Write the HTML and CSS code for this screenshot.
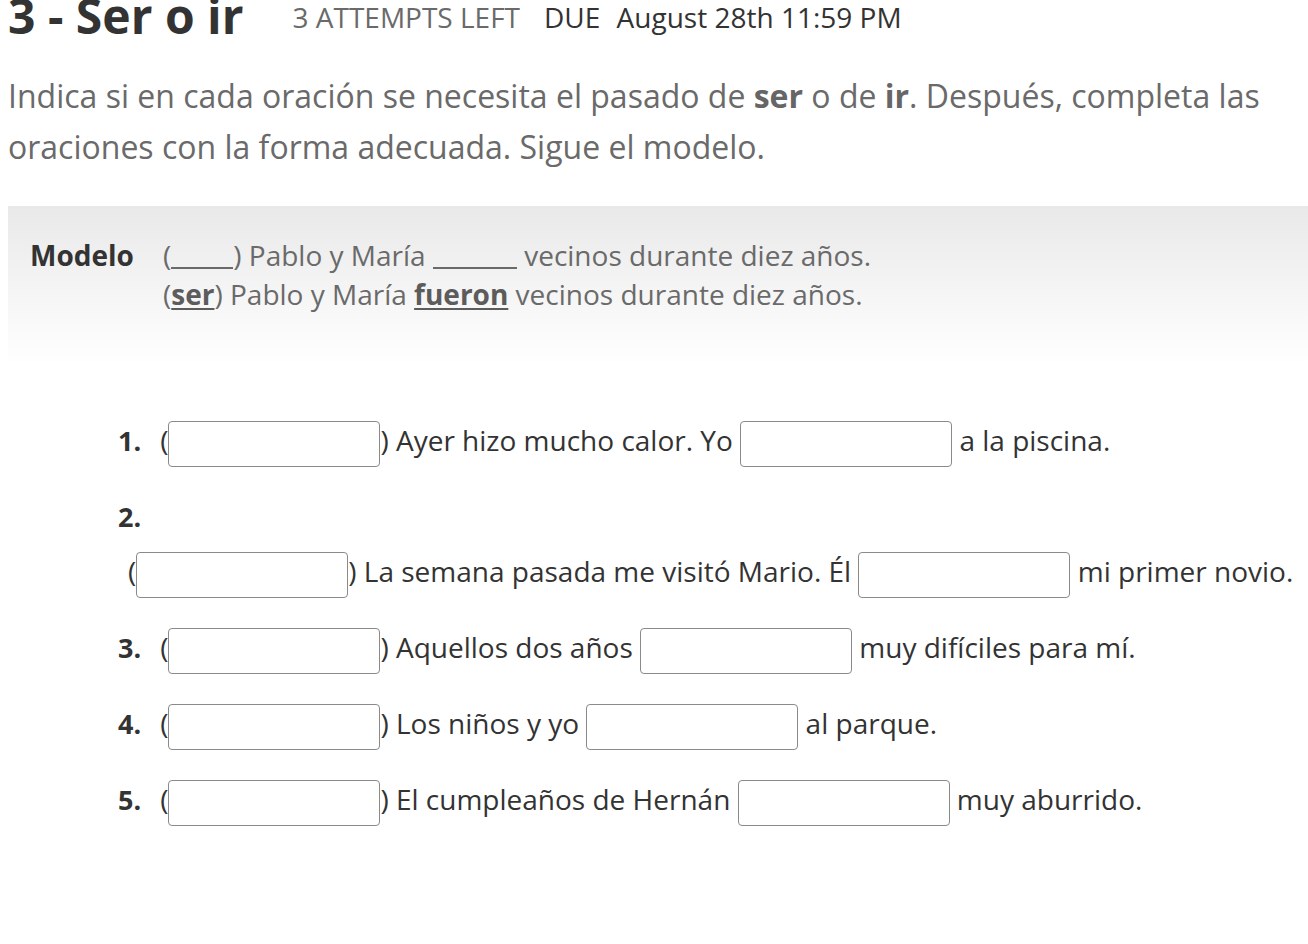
FILE: index.html
```html
<!DOCTYPE html>
<html lang="es">
<head>
<meta charset="UTF-8">
<meta name="viewport" content="width=device-width, initial-scale=1.0">
<title>3 - Ser o ir</title>
<link rel="stylesheet" href="styles.css">
</head>
<body>
<div class="page">
  <div class="header">
    <h1 class="title">3 - Ser o ir</h1>
    <span class="attempts">3 ATTEMPTS LEFT</span>
    <span class="due"><span class="due-label">DUE</span> August 28th 11:59 PM</span>
  </div>

  <p class="instructions">Indica si en cada oración se necesita el pasado de <b>ser</b> o de <b>ir</b>. Después, completa las oraciones con la forma adecuada. Sigue el modelo.</p>

  <div class="model">
    <div class="model-label">Modelo</div>
    <div class="model-text">
      <div>(<span class="blank short"></span>) Pablo y María <span class="blank long"></span> vecinos durante diez años.</div>
      <div>(<b class="answer">ser</b>) Pablo y María <b class="answer">fueron</b> vecinos durante diez años.</div>
    </div>
  </div>

  <ol class="items">
    <li class="item">
      <span class="num">1.</span>
      <span class="body">(<input type="text" class="blank-input">) Ayer hizo mucho calor. Yo <input type="text" class="blank-input"> a la piscina.</span>
    </li>
    <li class="item">
      <span class="num">2.</span>
      <span class="body">(<input type="text" class="blank-input">) La semana pasada me visitó Mario. Él <input type="text" class="blank-input"> mi primer novio.</span>
    </li>
    <li class="item">
      <span class="num">3.</span>
      <span class="body">(<input type="text" class="blank-input">) Aquellos dos años <input type="text" class="blank-input"> muy difíciles para mí.</span>
    </li>
    <li class="item">
      <span class="num">4.</span>
      <span class="body">(<input type="text" class="blank-input">) Los niños y yo <input type="text" class="blank-input"> al parque.</span>
    </li>
    <li class="item">
      <span class="num">5.</span>
      <span class="body">(<input type="text" class="blank-input">) El cumpleaños de Hernán <input type="text" class="blank-input"> muy aburrido.</span>
    </li>
  </ol>
</div>
</body>
</html>
```

FILE: styles.css
```css
body, html {
  margin: 0;
  font-family: "Open Sans", Arial, sans-serif;
  background: #fff;
  color: #333;
}

.page {
  padding-left: 8px;
  overflow: hidden;
}

.header {
  display: flex;
  align-items: flex-start;
  margin-top: -12px;
}

.title {
  margin: 0;
  font-size: 48px;
  font-weight: 700;
  color: #333;
  line-height: 56px;
}

.attempts {
  margin-left: 49px;
  margin-top: 10px;
  font-size: 28px;
  color: #6a6a6a;
}

.due {
  margin-left: 24px;
  margin-top: 10px;
  font-size: 28px;
  color: #333;
}

.due-label {
  margin-right: 9px;
}

.instructions {
  margin: 26px 0 0;
  padding-right: 20px;
  font-size: 32px;
  line-height: 51px;
  color: #6a6a6a;
}

.instructions b {
  color: #666;
}

.model {
  display: flex;
  margin-top: 34px;
  padding: 30px 22px 51px;
  height: 78px;
  background: linear-gradient(to bottom, #e9e9e9, #fff);
}

.model-label {
  width: 133px;
  font-size: 28px;
  font-weight: 700;
  line-height: 39px;
  color: #333;
}

.model-text {
  font-size: 28px;
  line-height: 39px;
  color: #6a6a6a;
}

.blank {
  display: inline-block;
  height: 0;
  border-bottom: 2px solid #6a6a6a;
  vertical-align: -3px;
}

.blank.short {
  width: 62px;
}

.blank.long {
  width: 84px;
}

.answer {
  text-decoration: underline;
  text-underline-offset: 3px;
  color: #5c5c5c;
}

.items {
  list-style: none;
  margin: 48px 0 0;
  padding: 0 0 0 110px;
}

.item {
  display: flex;
  flex-wrap: wrap;
  align-items: center;
  margin-bottom: 21px;
}

.num {
  margin-right: 9px;
  font-size: 27px;
  font-weight: 700;
  line-height: 55px;
  color: #333;
}

.body {
  margin-left: 10px;
  font-size: 28px;
  line-height: 55px;
  color: #333;
}

.blank-input {
  width: 212px;
  height: 46px;
  box-sizing: border-box;
  margin: 0;
  padding: 0 8px;
  border: 1px solid #8a8a8a;
  border-radius: 4px;
  vertical-align: middle;
  font-family: inherit;
  font-size: 22px;
}
```
